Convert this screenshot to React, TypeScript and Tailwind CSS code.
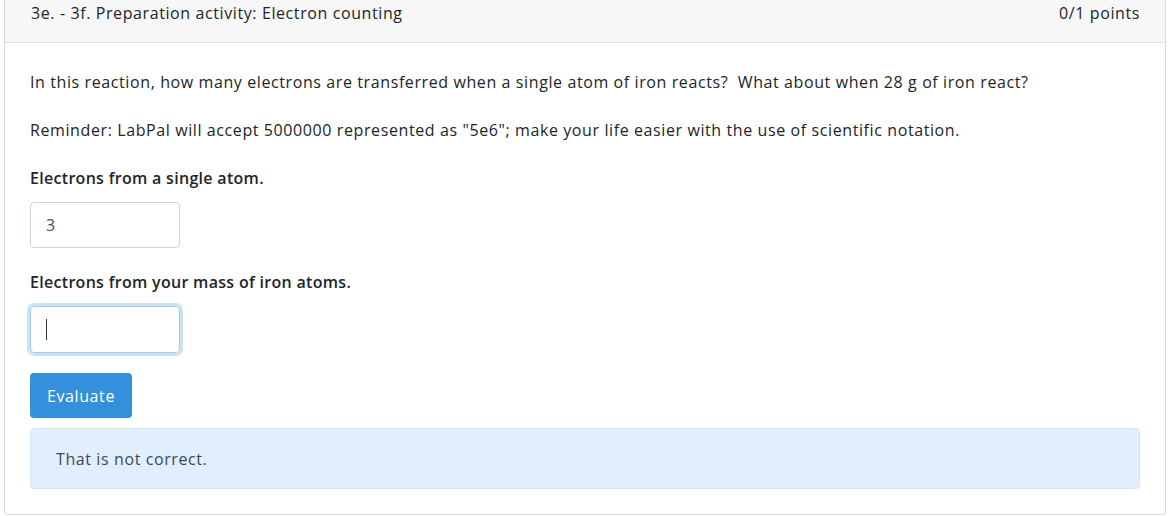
import React from 'react';

export default function App() {
  return (
    <div className="w-[1172px] h-[516px] bg-white font-['Open_Sans','Noto_Sans',sans-serif] text-[#212529] tracking-[0.6px] overflow-hidden">
      <div className="ml-[4px] w-[1162px] h-[515px] border-x border-b border-[#dcdcdc] rounded-b-[4px] flex flex-col">
        <div className="h-[43px] bg-[#f7f7f7] border-b border-[#dedede] flex items-start justify-between pl-[26px] pr-[25px] pt-[1px] text-[16px] leading-[24px]">
          <span>3e. - 3f. Preparation activity: Electron counting</span>
          <span>0/1 points</span>
        </div>
        <div className="px-[25px] pt-[27px] text-[16px] leading-[24px]">
          <p>In this reaction, how many electrons are transferred when a single atom of iron reacts?&nbsp; What about when 28 g of iron react?</p>
          <p className="mt-[24px]">Reminder: LabPal will accept 5000000 represented as "5e6"; make your life easier with the use of scientific notation.</p>
          <p className="mt-[24px] font-semibold tracking-[0.3px]">Electrons from a single atom.</p>
          <div className="mt-[12px] w-[150px] h-[46px] border border-[#ced4da] rounded-[4px] flex items-center pl-[15px] text-[#495057]">3</div>
          <p className="mt-[22px] font-semibold tracking-[0.3px]">Electrons from your mass of iron atoms.</p>
          <div className="mt-[12px] w-[150px] h-[47px] border border-[#a1cbef] rounded-[4px] shadow-[0_0_0_3px_rgba(52,144,220,0.25)] flex items-center pl-[15px]">
            <span className="w-px h-[21px] bg-[#333]" />
          </div>
          <button className="mt-[20px] w-[102px] h-[45px] bg-[#3490dc] text-white rounded-[4px] text-[16px] leading-[24px] tracking-[0.6px] flex items-center justify-center">Evaluate</button>
          <div className="mt-[10px] w-[1110px] h-[61px] bg-[#e1eefb] border border-[#d3e6f8] rounded-[4px] flex items-center pl-[25px] text-[#3b4a5a]">That is not correct.</div>
        </div>
      </div>
    </div>
  );
}
